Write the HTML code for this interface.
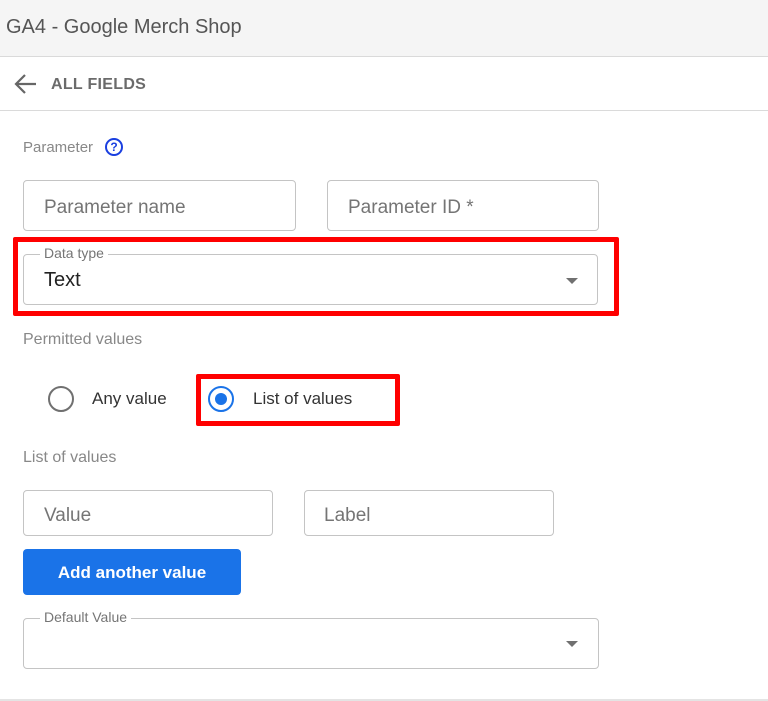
<!DOCTYPE html>
<html><head><style>
*{box-sizing:border-box;margin:0;padding:0}
body{width:768px;height:701px;background:#fff;font-family:"Liberation Sans",Roboto,sans-serif;position:relative;overflow:hidden}
.a{position:absolute}
.in{position:absolute;border:1px solid #c4c4c4;border-radius:4px;background:#fff}
.ph{position:absolute;color:#757575;font-size:19px}
.lbl{position:absolute;background:#fff;padding:0 4px;font-size:14px;color:#757575;top:-10px;left:16px}
.arr{position:absolute;width:0;height:0;border-left:6px solid transparent;border-right:6px solid transparent;border-top:6px solid #707070}
</style></head><body>
<div class="a" style="left:0;top:0;width:768px;height:57px;background:#f5f5f5;border-bottom:1px solid #dadada"></div>
<div class="a" style="left:6px;top:16px;font-size:20px;color:#555">GA4 - Google Merch Shop</div>
<svg class="a" style="left:14px;top:73px" width="24" height="22" viewBox="0 0 24 22"><path d="M22 11H3M11 2L2 11l9 9" stroke="#666" stroke-width="2.2" fill="none"/></svg>
<div class="a" style="left:51px;top:76px;font-size:16px;color:#6b6b6b;font-weight:bold;letter-spacing:.3px">ALL FIELDS</div>
<div class="a" style="left:0;top:110px;width:768px;height:1px;background:#dadada"></div>
<div class="a" style="left:23px;top:139px;font-size:15px;color:#888">Parameter</div>
<div class="a" style="left:105px;top:138px;width:18px;height:18px;border:2px solid #1a3fe0;border-radius:50%;color:#1a3fe0;font-size:12px;font-weight:bold;text-align:center;line-height:15px">?</div>
<div class="in" style="left:23px;top:180px;width:273px;height:51px"></div><div class="ph" style="left:44px;top:197px">Parameter name</div>
<div class="in" style="left:327px;top:180px;width:272px;height:51px"></div><div class="ph" style="left:348px;top:197px">Parameter ID *</div>
<div class="a" style="left:13px;top:237px;width:606px;height:79px;border:5px solid #f00;border-radius:2px"></div>
<div class="in" style="left:23px;top:254px;width:575px;height:51px"><div class="lbl">Data type</div></div>
<div class="a" style="left:44px;top:269px;font-size:20px;color:#222">Text</div>
<div class="arr" style="left:566px;top:278px"></div>
<div class="a" style="left:23px;top:331px;font-size:16px;color:#888">Permitted values</div>
<div class="a" style="left:48px;top:386px;width:26px;height:26px;border:2px solid #707070;border-radius:50%"></div>
<div class="a" style="left:92px;top:389px;font-size:17px;color:#333">Any value</div>
<div class="a" style="left:196px;top:374px;width:204px;height:52px;border:5px solid #f00;border-radius:2px"></div>
<div class="a" style="left:208px;top:386px;width:26px;height:26px;border:2px solid #1a73e8;border-radius:50%"><div style="position:absolute;left:5px;top:5px;width:12px;height:12px;border-radius:50%;background:#1a73e8"></div></div>
<div class="a" style="left:253px;top:389px;font-size:17px;color:#333">List of values</div>
<div class="a" style="left:23px;top:449px;font-size:16px;color:#888">List of values</div>
<div class="in" style="left:23px;top:490px;width:250px;height:46px"></div><div class="ph" style="left:44px;top:505px">Value</div>
<div class="in" style="left:304px;top:490px;width:250px;height:46px"></div><div class="ph" style="left:324px;top:505px">Label</div>
<div class="a" style="left:23px;top:549px;width:218px;height:46px;background:#1a73e8;border-radius:4px;color:#fff;font-size:17px;font-weight:bold;text-align:center;line-height:47px">Add another value</div>
<div class="in" style="left:23px;top:618px;width:576px;height:51px"><div class="lbl">Default Value</div></div>
<div class="arr" style="left:566px;top:641px"></div>
<div class="a" style="left:0;top:699px;width:768px;height:2px;background:#e4e4e4"></div>
</body></html>
